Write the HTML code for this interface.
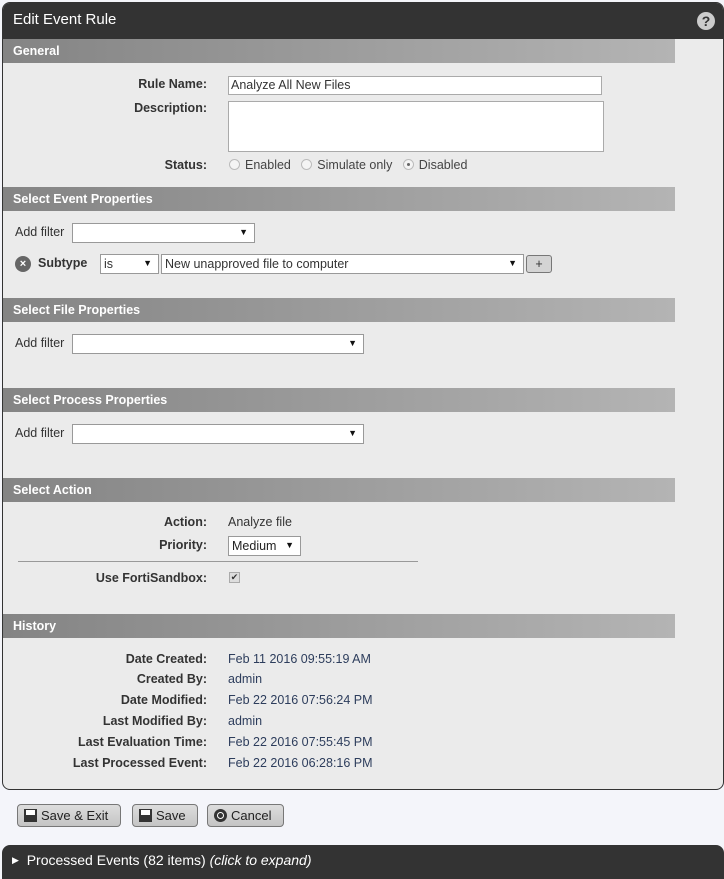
<!DOCTYPE html>
<html><head><style>
*{margin:0;padding:0;box-sizing:border-box}
body{width:724px;height:877px;background:#f4f5fa;font-family:"Liberation Sans",sans-serif;font-size:12.5px;color:#333;position:relative;overflow:hidden}
.a{position:absolute;white-space:nowrap}
#panel{position:absolute;left:2px;top:2px;width:722px;height:788px;background:#ebebeb;border:1px solid #333;border-radius:8px;overflow:hidden}
#title{position:absolute;left:0;top:0;width:100%;height:36px;background:#333;color:#fff;font-size:15px;padding:8px 10px}
.h{position:absolute;left:0;width:672px;height:24px;background:linear-gradient(to right,#848484,#b4b4b4);color:#fff;font-weight:bold;font-size:12.5px;padding:5px 10px}
.l{position:absolute;width:207px;text-align:right;font-weight:bold;color:#333;transform:translateY(-50%)}
.v{position:absolute;left:225px;color:#333;transform:translateY(-50%)}
.b{color:#2d3d5c}
.in{position:absolute;background:#fff;border:1px solid #aaa}
.sel{position:absolute;background:#fff;border:1px solid #999;height:20px;font-size:12.5px;padding:2px 3px}
.sel:after{content:"▼";position:absolute;right:6px;top:3px;font-size:9px;color:#111}
.rad{display:inline-block;width:11px;height:11px;border:1px solid #bbb;border-radius:50%;background:#f4f4f4;vertical-align:-1px;margin-right:5px;position:relative}
.btn{position:absolute;top:804px;height:23px;border:1px solid #777;border-radius:4px;background:linear-gradient(#ddd,#c4c4c4);font-size:13px;padding:3px 6px 0 6px;color:#222}
.disk{display:inline-block;width:13px;height:13px;background:#333;vertical-align:-2px;margin-right:4px;position:relative}
.disk:before{content:"";position:absolute;left:2px;top:1px;width:9px;height:5px;background:#fff}
</style></head><body>
<div id="panel">
<div id="title">Edit Event Rule</div>
<div class="a" style="right:8px;top:9px;width:18px;height:18px;border-radius:50%;background:#ccc;color:#333;font-weight:bold;font-size:14px;text-align:center;line-height:18px">?</div>
<div class="h" style="top:36px">General</div>
<div class="h" style="top:184px">Select Event Properties</div>
<div class="h" style="top:295px">Select File Properties</div>
<div class="h" style="top:385px">Select Process Properties</div>
<div class="h" style="top:475px">Select Action</div>
<div class="h" style="top:611px">History</div>
</div>
<div class="l" style="top:84px">Rule Name:</div>
<div class="in" style="left:228px;top:76px;width:374px;height:19px;padding:1px 2px">Analyze All New Files</div>
<div class="l" style="top:108px">Description:</div>
<div class="in" style="left:228px;top:101px;width:376px;height:51px"></div>
<div class="l" style="top:165px">Status:</div>
<div class="v" style="top:165px;left:229px;color:#444"><span class="rad"></span>Enabled &nbsp;&nbsp;<span class="rad"></span>Simulate only &nbsp;&nbsp;<span class="rad"><span style="position:absolute;left:3px;top:3px;width:3px;height:3px;border-radius:50%;background:#666"></span></span>Disabled</div>
<div class="a" style="left:15px;top:225px">Add filter</div>
<div class="sel" style="left:72px;top:223px;width:183px"></div>
<div class="a" style="left:15px;top:256px;width:16px;height:16px;border-radius:50%;background:#666;color:#fff;font-size:11px;text-align:center;line-height:16px;font-weight:bold">×</div>
<div class="a" style="left:38px;top:256px;font-weight:bold">Subtype</div>
<div class="sel" style="left:100px;top:254px;width:59px">is</div>
<div class="sel" style="left:161px;top:254px;width:363px">New unapproved file to computer</div>
<div class="a" style="left:526px;top:255px;width:26px;height:18px;border:1px solid #777;border-radius:3px;background:#d4d4d4;text-align:center;line-height:16px">+</div>
<div class="a" style="left:15px;top:336px">Add filter</div>
<div class="sel" style="left:72px;top:334px;width:292px"></div>
<div class="a" style="left:15px;top:426px">Add filter</div>
<div class="sel" style="left:72px;top:424px;width:292px"></div>
<div class="l" style="top:522px">Action:</div><div class="v" style="top:522px;left:228px">Analyze file</div>
<div class="l" style="top:545px">Priority:</div>
<div class="sel" style="left:228px;top:536px;width:73px;color:#222">Medium</div>
<div class="a" style="left:18px;top:561px;width:400px;height:1px;background:#999"></div>
<div class="l" style="top:578px">Use FortiSandbox:</div>
<div class="a" style="left:229px;top:572px;width:11px;height:11px;border:1px solid #aaa;background:#ddd;font-size:9px;line-height:9px;text-align:center">✔</div>
<div class="l" style="top:659px">Date Created:</div><div class="v b" style="top:659px;left:228px">Feb 11 2016 09:55:19 AM</div>
<div class="l" style="top:679px">Created By:</div><div class="v b" style="top:679px;left:228px">admin</div>
<div class="l" style="top:700px">Date Modified:</div><div class="v b" style="top:700px;left:228px">Feb 22 2016 07:56:24 PM</div>
<div class="l" style="top:721px">Last Modified By:</div><div class="v b" style="top:721px;left:228px">admin</div>
<div class="l" style="top:742px">Last Evaluation Time:</div><div class="v b" style="top:742px;left:228px">Feb 22 2016 07:55:45 PM</div>
<div class="l" style="top:763px">Last Processed Event:</div><div class="v b" style="top:763px;left:228px">Feb 22 2016 06:28:16 PM</div>
<div class="btn" style="left:17px;width:104px"><span class="disk"></span>Save &amp; Exit</div>
<div class="btn" style="left:132px;width:66px"><span class="disk"></span>Save</div>
<div class="btn" style="left:207px;width:77px"><span style="display:inline-block;width:13px;height:13px;border-radius:50%;background:#333;vertical-align:-2px;margin-right:4px;position:relative"><span style="position:absolute;left:3px;top:3px;width:7px;height:7px;border:1.5px solid #fff;border-radius:50%"></span></span>Cancel</div>
<div class="a" style="left:2px;top:845px;width:722px;height:34px;background:#333;border-radius:8px 8px 0 0;color:#fff;font-size:14px;padding:7px 10px"><span style="font-size:9px;vertical-align:2px">▶</span>&nbsp; Processed Events (82 items) <i>(click to expand)</i></div>
</body></html>
